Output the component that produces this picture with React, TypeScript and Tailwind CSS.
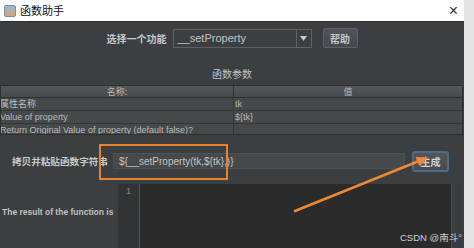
import React from "react";

const cjk = { fontFamily: '"Noto Sans CJK SC", "Liberation Sans", sans-serif' };
const sans = { fontFamily: '"Liberation Sans", "Noto Sans CJK SC", sans-serif' };

const rows = [
    ["属性名称", "tk", "h-[13px]"],
    ["Value of property", "${tk}", "h-[13px]"],
    ["Return Original Value of property (default false)?", "", "h-[10px]"],
];

export default function App() {
    return (
        <div className="relative w-[474px] h-[248px] overflow-hidden bg-[#e4e4e4] flex" style={sans}>
            <div className="w-[464px] h-full flex flex-col">
                {/* Title bar */}
                <div className="h-[22px] bg-white border-b border-[#2a2a2a] flex items-center pl-[4px] pr-[6px] shrink-0">
                    <div className="w-[12px] h-[12px] rounded-[2px] bg-gradient-to-b from-[#8fb6de] to-[#d7a56a] border border-[#7b8da3] mr-[4px]" />
                    <span className="text-[11px] text-[#111]" style={cjk}>函数助手</span>
                    <span className="ml-auto text-[16px] leading-none text-[#333] font-light">×</span>
                </div>

                {/* Body */}
                <div className="flex-1 bg-[#3c3f41] flex flex-col text-[#bbbbbb]">
                    {/* Function chooser */}
                    <div className="flex items-center justify-center mt-[6px] h-[20px]">
                        <span className="text-[10px] font-bold text-[#c8c8c8] mr-[6px] whitespace-nowrap" style={cjk}>选择一个功能</span>
                        <div className="w-[139px] h-[19px] border border-[#5e6162] bg-[#3c3f41] flex items-center">
                            <span className="flex-1 pl-[4px] text-[11px] text-[#c4c4c4]">__setProperty</span>
                            <div className="w-[15px] h-full border-l border-[#5e6162] flex items-center justify-center">
                                <svg width="7" height="5" viewBox="0 0 7 5"><path d="M0 0h7L3.5 5z" fill="#c8c8c8" /></svg>
                            </div>
                        </div>
                        <div className="ml-[11px] w-[35px] h-[20px] border border-[#5e6162] rounded-[2px] bg-gradient-to-b from-[#50545a] to-[#45494c] flex items-center justify-center">
                            <span className="text-[10px] font-bold text-[#c4c4c4]" style={cjk}>帮助</span>
                        </div>
                    </div>

                    {/* Section title */}
                    <div className="text-center text-[10px] mt-[19px] h-[14px] leading-[14px] text-[#c0c0c0]" style={cjk}>函数参数</div>

                    {/* Parameter table */}
                    <div className="mt-[4px] mr-[1px] border border-[#2e3031] bg-[#45494a] text-[9px]">
                        <div className="grid grid-cols-[233px_1fr] h-[12px] bg-gradient-to-b from-[#53575a] to-[#474b4d] border-b border-[#2e3031]">
                            <div className="text-center text-[9px] leading-[12px] border-r border-[#2e3031]" style={cjk}>名称:</div>
                            <div className="text-center text-[9px] leading-[12px]" style={cjk}>值</div>
                        </div>
                        {rows.map(([name, value, h], i) => (
                            <div key={i} className={`grid grid-cols-[233px_1fr] ${h} overflow-hidden border-b border-[#34373a] last:border-b-0`}>
                                <div className="leading-[12px] whitespace-nowrap overflow-hidden border-r border-[#34373a] -ml-[1px]">{name}</div>
                                <div className="leading-[12px] pl-[1px]">{value}</div>
                            </div>
                        ))}
                    </div>

                    {/* Function string row */}
                    <div className="flex items-center mt-[15px] h-[22px]">
                        <span className="ml-[12px] w-[101px] text-[9.6px] font-bold text-[#c8c8c8] whitespace-nowrap" style={cjk}>拷贝并粘贴函数字符串</span>
                        <div className="w-[292px] h-[16px] border border-[#4e5254] bg-[#45494a] flex items-center pl-[5px]">
                            <span className="text-[10px] text-[#c4c4c4]">{"${__setProperty(tk,${tk},)}"}</span>
                        </div>
                        <div className="ml-[7px] w-[37px] h-[21px] border-2 border-[#4f6b8a] rounded-[3px] bg-gradient-to-b from-[#52565a] to-[#474b4e] flex items-center justify-center">
                            <span className="text-[10px] font-bold text-[#d0d0d0]" style={cjk}>生成</span>
                        </div>
                    </div>

                    {/* Result area */}
                    <div className="flex flex-1 mt-[12px]">
                        <div className="w-[118px] flex items-center pl-[2px] pb-[8px]">
                            <span className="text-[8.5px] font-bold text-[#c0c0c0] whitespace-nowrap">The result of the function is</span>
                        </div>
                        <div className="flex-1 flex bg-[#2b2b2b] mr-[2px]">
                            <div className="w-[22px] bg-[#313335] border-r border-[#555759] text-[9px] text-[#888] text-center pt-[1px]">1</div>
                            <div className="flex-1" />
                            <div className="w-[11px] bg-[#3a3d3f] border-l border-[#4a4d4f]" />
                        </div>
                    </div>
                </div>
            </div>

            {/* Annotation: orange highlight box */}
            <div className="absolute left-[99px] top-[144px] w-[129px] h-[36px] border-2 border-[#e8822e]" />

            {/* Annotation: arrow */}
            <svg className="absolute left-0 top-0 pointer-events-none" width="474" height="248">
                <line x1="295" y1="211" x2="419" y2="161" stroke="#ef8a32" strokeWidth="2.5" strokeLinecap="round" />
                <path d="M428 157.5 L415.5 157 L419.5 166.5 Z" fill="#ef8a32" />
            </svg>

            {/* Watermark */}
            <span className="absolute right-[12px] top-[231px] text-[9.5px] text-[#d0d0d0] whitespace-nowrap" style={sans}>CSDN @南斗°</span>
        </div>
    );
}
